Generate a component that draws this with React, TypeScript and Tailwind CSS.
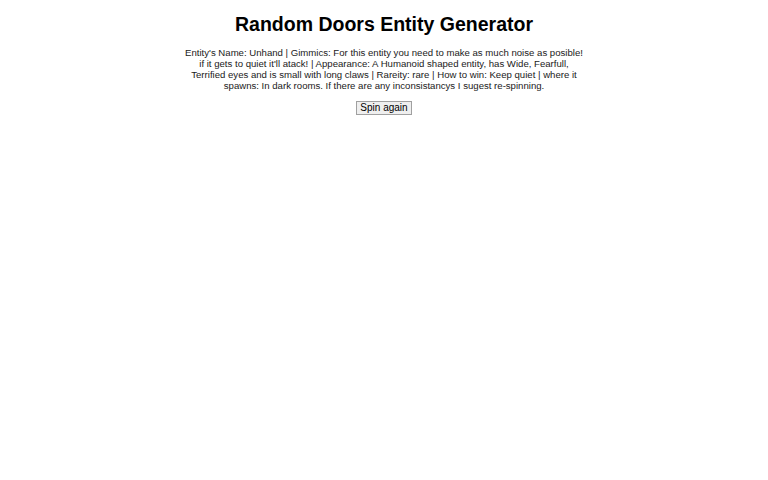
import { useState } from "react";

const ENTITY = {
  name: "Unhand",
  gimmics:
    "For this entity you need to make as much noise as posible! if it gets to quiet it'll atack!",
  appearance:
    "A Humanoid shaped entity, has Wide, Fearfull, Terrified eyes and is small with long claws",
  rareity: "rare",
  howToWin: "Keep quiet",
  spawns: "In dark rooms.",
};

function describe(e: typeof ENTITY) {
  return `Entity's Name: ${e.name} | Gimmics: ${e.gimmics} | Appearance: ${e.appearance} | Rareity: ${e.rareity} | How to win: ${e.howToWin} | where it spawns: ${e.spawns} If there are any inconsistancys I sugest re-spinning.`;
}

export default function App() {
  const [spins, setSpins] = useState(0);

  return (
    <div className="min-h-screen bg-white text-center font-['Liberation_Sans',Arial,sans-serif] text-black">
      <h1 className="pt-[13px] text-[19.5px] font-bold leading-[22px]">Random Doors Entity Generator</h1>
      <p className="mx-auto mt-[12px] w-[402px] text-[9.6px] leading-[11px] text-[#1a1a1a]">
        {describe(ENTITY)}
      </p>
      <button
        type="button"
        onClick={() => setSpins(spins + 1)}
        className="mt-[10px] border border-[#a0a0a0] bg-[#efefef] px-[3px] text-[10px] leading-[12px] text-black"
      >
        Spin again
      </button>
    </div>
  );
}
